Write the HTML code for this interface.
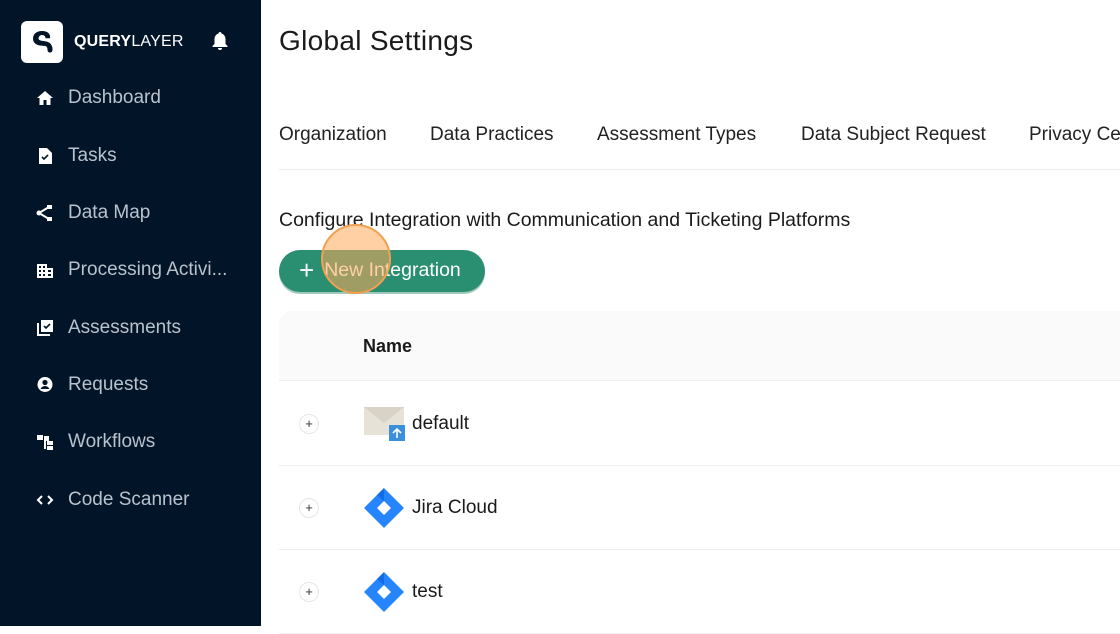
<!DOCTYPE html>
<html><head><style>
*{margin:0;padding:0;box-sizing:border-box}
body{width:1120px;height:626px;overflow:hidden;background:#fff;font-family:"Liberation Sans",sans-serif;position:relative}
.sb{position:absolute;left:0;top:0;width:261px;height:626px;background:#021428}
.logo{position:absolute;left:21px;top:21px;width:42px;height:42px;background:#fff;border-radius:6px}
.brand{position:absolute;left:74px;top:33px;color:#fff;font-size:16px;letter-spacing:0.2px}
.nav{position:absolute;left:36px;color:#b9c2cd;font-size:19px;display:flex;align-items:center}
.nav svg{width:18px;height:18px;margin-right:14px;fill:#fff}
.t{position:absolute;color:#1a1a1a;white-space:nowrap}
.tab{position:absolute;top:124px;font-size:19px;color:#222;white-space:nowrap}
.row{position:absolute;left:279px;width:841px;height:84px;border-bottom:1px solid #eee}
.pl{position:absolute;left:20px;width:20px;height:20px;border:1px solid #e6e6e6;border-radius:50%;font-size:13px;text-align:center;line-height:17px;color:#333}
.nm{position:absolute;left:133px;font-size:19px;color:#1a1a1a}
</style></head><body>
<div class="sb">
 <div class="logo"><svg width="42" height="42" viewBox="0 0 42 42"><path d="M21 10c-6 0-9 3.5-9 7.5 0 4 3 6.5 7 7l5 .5c2 .3 2.5 2 2.5 4 0 1.5 1 2.5 2.5 2.5s2.5-1 2.5-3c0-4-2-7-6-8l-5-.7c-2-.3-3-1.2-3-2.5 0-2 2-3.3 3.5-3.3 2.5 0 3.5 1.5 3.5 3.3h4.5C30 13 26.5 10 21 10z" fill="#021428"/></svg></div>
 <div class="brand"><b>QUERY</b>LAYER</div>
 <svg style="position:absolute;left:212px;top:32px" width="16" height="18" viewBox="0 0 16 18"><path d="M8 0c1 0 1.5.7 1.5 1.5C12 2.2 13.5 4.5 13.5 7v5l2 2v1H.5v-1l2-2V7c0-2.5 1.5-4.8 4-5.5C6.5.7 7 0 8 0zM6 16h4a2 2 0 0 1-4 0z" fill="#fff"/></svg>
 <div class="nav" style="top:87px"><svg viewBox="0 0 18 18"><path d="M9 2l8 7h-2.5v7h-4v-5h-3v5h-4V9H1z"/></svg>Dashboard</div>
 <div class="nav" style="top:145px"><svg viewBox="0 0 18 18"><path d="M3 1h8l5 5v11H3z" /><path d="M6 10l2 2 4-4" stroke="#021428" stroke-width="1.6" fill="none"/></svg>Tasks</div>
 <div class="nav" style="top:202px"><svg viewBox="0 0 18 18"><circle cx="3" cy="9" r="2.5"/><rect x="11" y="1" width="5" height="4"/><rect x="11" y="13" width="5" height="4"/><path d="M3 9L13 3M3 9l10 6" stroke="#fff" stroke-width="2"/></svg>Data Map</div>
 <div class="nav" style="top:259px"><svg viewBox="0 0 18 18"><path d="M1 3h10v4h6v10H1z"/><path d="M3 5h2v2H3zM7 5h2v2H7zM3 9h2v2H3zM7 9h2v2H7zM3 13h2v2H3zM7 13h2v2H7zM12 9h3v2h-3zM12 13h3v2h-3z" fill="#021428"/></svg>Processing Activi...</div>
 <div class="nav" style="top:317px"><svg viewBox="0 0 18 18"><path d="M1 4h2v11h11v2H1z"/><rect x="5" y="1" width="12" height="12"/><path d="M8 7l2 2 4-4" stroke="#021428" stroke-width="1.6" fill="none"/></svg>Assessments</div>
 <div class="nav" style="top:374px"><svg viewBox="0 0 18 18"><circle cx="9" cy="8.5" r="7.5"/><circle cx="9" cy="6.5" r="2.6" fill="#021428"/><path d="M4.5 13c1-2 2.5-3 4.5-3s3.5 1 4.5 3" fill="#021428"/></svg>Requests</div>
 <div class="nav" style="top:431px"><svg viewBox="0 0 18 18"><rect x="1" y="2" width="6" height="5"/><rect x="8" y="3" width="5" height="5"/><rect x="11" y="8" width="6" height="4"/><rect x="11" y="13" width="6" height="4"/><rect x="8" y="8" width="2" height="8"/></svg>Workflows</div>
 <div class="nav" style="top:489px"><svg viewBox="0 0 18 18"><path d="M6 5L2 9l4 4M12 5l4 4-4 4" stroke="#fff" stroke-width="2" fill="none"/></svg>Code Scanner</div>
</div>
<div class="t" style="left:279px;top:25px;font-size:28px;letter-spacing:0.3px">Global Settings</div>
<div class="tab" style="left:279px">Organization</div>
<div class="tab" style="left:430px">Data Practices</div>
<div class="tab" style="left:597px">Assessment Types</div>
<div class="tab" style="left:801px">Data Subject Request</div>
<div class="tab" style="left:1029px">Privacy Center</div>
<div style="position:absolute;left:279px;top:169px;width:841px;height:1px;background:#ececec"></div>
<div class="t" style="left:279px;top:209px;font-size:19.5px">Configure Integration with Communication and Ticketing Platforms</div>
<div style="position:absolute;left:279px;top:250px;width:206px;height:42px;border-radius:21px;background:#2a8f70;box-shadow:0 2px 0 #9fc9bb;color:#fff;font-size:19.5px;line-height:41px;padding-left:20px;white-space:nowrap"><span style="font-size:26px;font-weight:300;vertical-align:-3px;margin-right:10px">+</span>New Integration</div>
<div style="position:absolute;left:321px;top:224px;width:70px;height:70px;border-radius:50%;background:rgba(255,170,90,0.55);border:2px solid #f0a050"></div>
<div style="position:absolute;left:279px;top:311px;width:841px;height:70px;background:#fafafa;border-top-left-radius:14px;border-bottom:1px solid #eee"></div>
<div class="t" style="left:363px;top:336px;font-size:18px;font-weight:bold">Name</div>
<div class="row" style="top:382px"><div class="pl" style="top:32px">+</div>
 <svg style="position:absolute;left:84px;top:24px" width="44" height="36" viewBox="0 0 44 36"><rect x="1" y="1" width="40" height="28" fill="#e6e2d8"/><path d="M1 1l20 16L41 1" fill="#d8d3c6"/><rect x="26" y="19" width="16" height="16" fill="#3c8fdc"/><path d="M34 32v-9M30 27l4-4 4 4" stroke="#fff" stroke-width="1.6" fill="none"/></svg>
 <div class="nm" style="top:31px">default</div></div>
<div class="row" style="top:466px"><div class="pl" style="top:32px">+</div>
 <svg style="position:absolute;left:84px;top:21px" width="42" height="42" viewBox="0 0 42 42"><path d="M21 1l20 20-20 20L1 21z" fill="#2684ff"/><path d="M21 14l7 7-7 7-7-7z" fill="#fff"/><path d="M21 1l-7 7 7 6z" fill="#0052cc" opacity=".5"/></svg>
 <div class="nm" style="top:31px">Jira Cloud</div></div>
<div class="row" style="top:550px"><div class="pl" style="top:32px">+</div>
 <svg style="position:absolute;left:84px;top:21px" width="42" height="42" viewBox="0 0 42 42"><path d="M21 1l20 20-20 20L1 21z" fill="#2684ff"/><path d="M21 14l7 7-7 7-7-7z" fill="#fff"/><path d="M21 1l-7 7 7 6z" fill="#0052cc" opacity=".5"/></svg>
 <div class="nm" style="top:31px">test</div></div>
</body></html>
